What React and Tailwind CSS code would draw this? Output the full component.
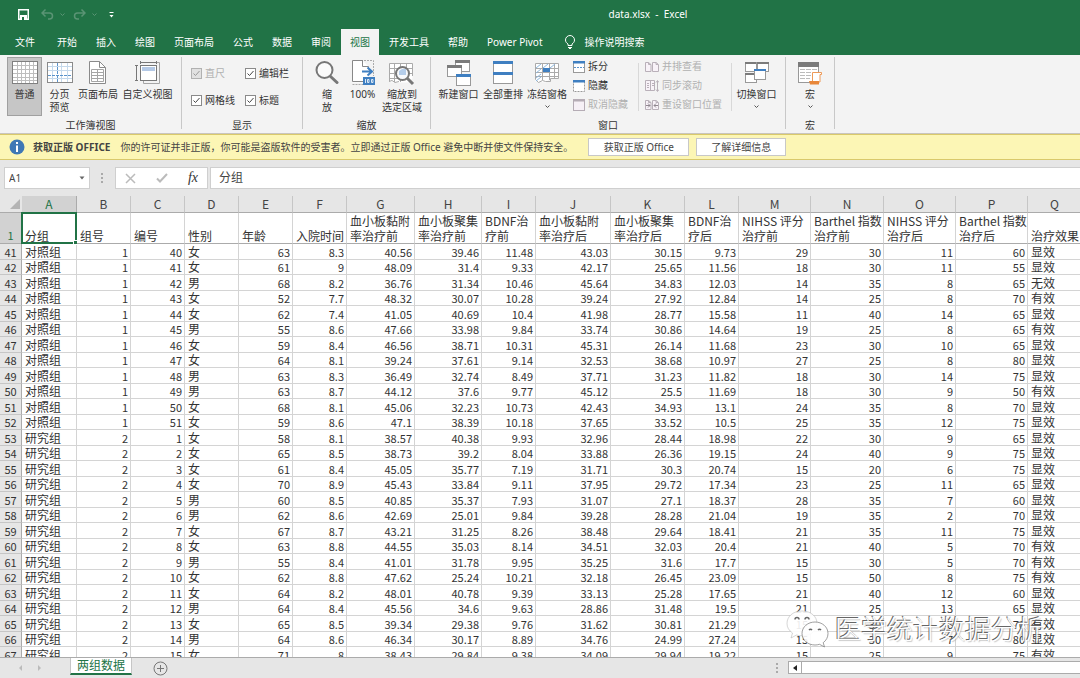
// src/App.jsx
import React, { useState } from "react";

const TABS = ["开始", "插入", "绘图", "页面布局", "公式", "数据", "审阅", "视图", "开发工具", "帮助", "Power Pivot"];

const COLUMNS = [
  { letter: "A", width: 55, title: ["分组"], text: true },
  { letter: "B", width: 54, title: ["组号"] },
  { letter: "C", width: 54, title: ["编号"] },
  { letter: "D", width: 54, title: ["性别"], text: true },
  { letter: "E", width: 54, title: ["年龄"] },
  { letter: "F", width: 54, title: ["入院时间"] },
  { letter: "G", width: 68, title: ["血小板黏附", "率治疗前"] },
  { letter: "H", width: 67, title: ["血小板聚集", "率治疗前"] },
  { letter: "I", width: 54, title: ["BDNF治", "疗前"] },
  { letter: "J", width: 75, title: ["血小板黏附", "率治疗后"] },
  { letter: "K", width: 74, title: ["血小板聚集", "率治疗后"] },
  { letter: "L", width: 54, title: ["BDNF治", "疗后"] },
  { letter: "M", width: 72, title: ["NIHSS 评分", "治疗前"] },
  { letter: "N", width: 73, title: ["Barthel 指数", "治疗前"] },
  { letter: "O", width: 72, title: ["NIHSS 评分", "治疗后"] },
  { letter: "P", width: 72, title: ["Barthel 指数", "治疗后"] },
  { letter: "Q", width: 54, title: ["治疗效果"], text: true },
];

const FIRST_ROW = 41;

const ROWS = `
对照组 1 40 女 63 8.3 40.56 39.46 11.48 43.03 30.15 9.73 29 30 11 60 显效
对照组 1 41 女 61 9 48.09 31.4 9.33 42.17 25.65 11.56 18 30 11 55 显效
对照组 1 42 男 68 8.2 36.76 31.34 10.46 45.64 34.83 12.03 14 35 8 65 无效
对照组 1 43 女 52 7.7 48.32 30.07 10.28 39.24 27.92 12.84 14 25 8 70 有效
对照组 1 44 女 62 7.4 41.05 40.69 10.4 41.98 28.77 15.58 11 40 14 65 显效
对照组 1 45 男 55 8.6 47.66 33.98 9.84 33.74 30.86 14.64 19 25 8 65 有效
对照组 1 46 女 59 8.4 46.56 38.71 10.31 45.31 26.14 11.68 23 30 10 65 显效
对照组 1 47 女 64 8.1 39.24 37.61 9.14 32.53 38.68 10.97 27 25 8 80 显效
对照组 1 48 男 63 8.3 36.49 32.74 8.49 37.71 31.23 11.82 18 30 14 75 显效
对照组 1 49 男 63 8.7 44.12 37.6 9.77 45.12 25.5 11.69 18 30 9 50 有效
对照组 1 50 女 68 8.1 45.06 32.23 10.73 42.43 34.93 13.1 24 35 8 70 显效
对照组 1 51 女 59 8.6 47.1 38.39 10.18 37.65 33.52 10.5 25 35 12 75 显效
研究组 2 1 女 58 8.1 38.57 40.38 9.93 32.96 28.44 18.98 22 30 9 65 显效
研究组 2 2 女 65 8.5 38.73 39.2 8.04 33.88 26.36 19.15 24 40 9 75 显效
研究组 2 3 女 61 8.4 45.05 35.77 7.19 31.71 30.3 20.74 15 20 6 75 显效
研究组 2 4 女 70 8.9 45.43 33.84 9.11 37.95 29.72 17.34 23 25 11 65 显效
研究组 2 5 男 60 8.5 40.85 35.37 7.93 31.07 27.1 18.37 28 35 7 60 显效
研究组 2 6 男 62 8.6 42.69 25.01 9.84 39.28 28.28 21.04 19 35 2 70 显效
研究组 2 7 女 67 8.7 43.21 31.25 8.26 38.48 29.64 18.41 21 35 11 75 显效
研究组 2 8 女 63 8.8 44.55 35.03 8.14 34.51 32.03 20.4 21 40 5 70 有效
研究组 2 9 男 55 8.4 41.01 31.78 9.95 35.25 31.6 17.7 15 30 5 70 有效
研究组 2 10 女 62 8.8 47.62 25.24 10.21 32.18 26.45 23.09 15 50 8 75 有效
研究组 2 11 女 64 8.2 48.01 40.78 9.39 33.13 25.28 17.65 21 40 12 60 显效
研究组 2 12 男 64 8.4 45.56 34.6 9.63 28.86 31.48 19.5 21 25 13 65 显效
研究组 2 13 女 65 8.5 39.34 29.38 9.76 31.62 30.81 21.29 15 30 6 70 有效
研究组 2 14 男 64 8.6 46.34 30.17 8.89 34.76 24.99 27.24 15 30 7 80 显效
研究组 2 15 女 71 8 38.43 29.84 9.38 34.09 29.94 19.22 15 25 9 75 有效
`
  .trim()
  .split("\n")
  .map((line) => line.split(" "));

/* ---------- icons ---------- */

function NormalIcon() {
  return (
    <svg width="26" height="24" viewBox="0 0 26 24" fill="none">
      <rect x="0.5" y="1.5" width="25" height="22" fill="#fff" stroke="#7f7f7f" />
      <path d="M1 5.5h24M1 9.5h24M1 13.5h24M1 17.5h24M1 20.5h24M5.5 2v21M9.5 2v21M13.5 2v21M17.5 2v21M21.5 2v21" stroke="#bdbdbd" />
    </svg>
  );
}

function PageBreakIcon() {
  return (
    <svg width="26" height="24" viewBox="0 0 26 24" fill="none">
      <rect x="0.5" y="2.5" width="25" height="20" fill="#fff" stroke="#8a8a8a" />
      <path d="M1 6.5h24M1 10.5h24M1 18.5h24M5.5 3v19M14.5 3v19M20.5 3v19" stroke="#c5d9ec" />
      <path d="M1 15.5h24M10.5 3v19" stroke="#5b93cb" strokeDasharray="3 1" />
    </svg>
  );
}

function PageLayoutIcon() {
  return (
    <svg width="20" height="24" viewBox="0 0 20 24" fill="none">
      <path d="M1.5 1.5h10l6 6v16h-16z" fill="#fff" stroke="#8a8a8a" />
      <path d="M11.5 1.5v6h6" stroke="#8a8a8a" />
      <path d="M3.5 9.5h12v12h-12zM3.5 12.5h12M3.5 15.5h12M3.5 18.5h12M9.5 9v12" stroke="#a5a5a5" />
    </svg>
  );
}

function CustomViewIcon() {
  return (
    <svg width="26" height="24" viewBox="0 0 26 24" fill="none">
      <path d="M6 2.5h15M5.5 1v3M21.5 1v3M1.5 6v14M0 5.5h3M0 20.5h3" stroke="#777" />
      <path d="M22 2.5h2.5v21H8.5v-3" stroke="#a5a5a5" />
      <rect x="5.5" y="5.500" width="16" height="15" fill="#fff" stroke="#777" />
      <rect x="7" y="7" width="13" height="4" fill="#b4c9e6" />
    </svg>
  );
}

function ZoomIcon() {
  return (
    <svg width="24" height="24" viewBox="0 0 24 24" fill="none">
      <path d="M15 16l7 6.5" stroke="#777" strokeWidth="3" strokeLinecap="round" />
      <circle cx="9.5" cy="10" r="8" fill="#fbfbfb" stroke="#777" strokeWidth="2" />
    </svg>
  );
}

function Zoom100Icon() {
  return (
    <svg width="24" height="26" viewBox="0 0 24 26" fill="none">
      <path d="M1.5 0.5h10l6 6v16h-16z" fill="#fff" />
      <path d="M12 0.5H1.5v21H12M11.5 0.500v6h6v3" stroke="#888" />
      <path d="M13 0.5h9.5V16M1.5 24.5H12" stroke="#aaa" strokeDasharray="2 1" />
      <path d="M11 11.5h9M16.5 7.5l4.500 4-4.500 4" stroke="#3f7fc1" strokeWidth="2" />
      <rect x="12" y="17" width="12" height="8" fill="#3f7fc1" />
      <path d="M14.5 19v4M16.5 19.5h1.500v3h-1.500zM20.5 19.5h1.500v3h-1.500z" stroke="#dbe8f5" />
    </svg>
  );
}

function ZoomSelectionIcon() {
  return (
    <svg width="26" height="26" viewBox="0 0 26 26" fill="none">
      <path d="M0.5 3.5h23v15l-5 4H3l-2.5-1z" fill="#fff" />
      <path d="M0.5 3.5h23V16M0.5 3.5v18M0 8.5h24M0 13.5h24M0 18.5h20M5.5 3v19M11.5 3v19M17.5 3v12M0 21.5l3-1 3 2 4-1" stroke="#aaa" />
      <path d="M18 18l6 6" stroke="#777" strokeWidth="3" />
      <circle cx="13.5" cy="13.5" r="6.5" fill="#f7f9fc" stroke="#777" strokeWidth="2" />
      <path d="M10 15v-4l3-2h4v6z" fill="#b4cdea" />
    </svg>
  );
}

function NewWindowIcon() {
  return (
    <svg width="24" height="26" viewBox="0 0 24 26" fill="none">
      <rect x="8.5" y="0.5" width="14" height="11" fill="#fff" stroke="#999" />
      <path d="M8 0h15v3H8z" fill="#7b7b7b" />
      <rect x="0.5" y="5.5" width="14" height="11" fill="#fff" stroke="#999" />
      <path d="M0 5h15v3H0z" fill="#7b7b7b" />
      <rect x="9.5" y="14.5" width="14" height="11" fill="#fff" stroke="#999" />
      <path d="M9 14h15v3H9z" fill="#3f7fc1" />
    </svg>
  );
}

function ArrangeIcon() {
  return (
    <svg width="22" height="24" viewBox="0 0 22 24" fill="none">
      <rect x="1.5" y="1.5" width="19" height="22" fill="#fff" stroke="#999" />
      <path d="M1 1h20v3H1zM1 12h20v3H1z" fill="#3f7fc1" />
    </svg>
  );
}

function FreezeIcon() {
  return (
    <svg width="26" height="24" viewBox="0 0 26 24" fill="none">
      <path d="M1.5 3.5h23v15h-8l-5 4-10-1z" fill="#fff" />
      <path d="M1.500 3.5h23v15h-8M1.5 3.5v16l3 3 4-2 3 1h5v-3M1 8.5h23M1 12.5h23M1 16.5h23M8.5 3v17M15.5 3v17M20.5 3v15" stroke="#aaa" />
      <path d="M2 8l5-4M9 8l5-4M16 8l5-4M2 13l5-4M2 18l5-4M2 21l5-4" stroke="#8fb8de" />
      <rect x="9" y="8" width="7" height="4" fill="#3f7fc1" />
    </svg>
  );
}

function SwitchWindowIcon() {
  return (
    <svg width="24" height="24" viewBox="0 0 24 24" fill="none">
      <rect x="0.5" y="2.5" width="11" height="9" fill="#fff" stroke="#999" />
      <rect x="12.5" y="2.5" width="11" height="9" fill="#fff" stroke="#999" />
      <rect x="0.5" y="13.5" width="11" height="9" fill="#fff" stroke="#999" />
      <path d="M0 2h11v2H0zM12 2h12v2H12zM0 13h11v2H0z" fill="#7b7b7b" />
      <rect x="9.5" y="9.5" width="11" height="10" fill="#fff" stroke="#999" />
      <path d="M9 9h12v2H9z" fill="#3f7fc1" />
    </svg>
  );
}

function MacroIcon() {
  return (
    <svg width="26" height="26" viewBox="0 0 26 26" fill="none">
      <rect x="1.5" y="2.5" width="20" height="20" fill="#fff" stroke="#999" />
      <path d="M1 2h21v5H1z" fill="#7b7b7b" />
      <path d="M3 9.5h5M9 9.5h5M15 9.5h5M3 12.5h5M9 12.5h5M3 15.5h5M9 15.5h5M3 18.5h5M9 18.500h4" stroke="#bbb" />
      <path d="M15.5 22v-9.500h9v2h-1.500V22z" fill="#fff" stroke="#ee9a58" />
      <path d="M12 21h10v3.500h-9z" fill="#e8873a" />
    </svg>
  );
}

function PaneIcon({ kind }) {
  const off = kind === "unhide";
  return (
    <svg width="12" height="12" viewBox="0 0 12 12" fill="none">
      <rect
        x="0.5"
        y="0.5"
        width="11"
        height="11"
        fill={off ? "#f6f0f6" : "#fff"}
        stroke={off ? "#b5acb5" : "#999"}
        strokeDasharray={kind === "hide" ? "2 1" : undefined}
      />
      <path d="M0 0h12v2.500H0z" fill={off ? "#b5acb5" : "#3f7fc1"} />
      {kind === "split" && <path d="M1 6.5h10" stroke="#5b93cb" strokeDasharray="2 1" />}
    </svg>
  );
}

function CompareIcon({ kind }) {
  return (
    <svg width="14" height="12" viewBox="0 0 14 12" fill="#f8f2f8" stroke="#b9b0b9">
      {kind === "sync" ? (
        <>
          <path d="M0.5 0.5h9v10h-9zM5.5 1v9M2 3.5h2M2 5.5h2M2 7.5h2M7 3.5h2M7 5.5h2" />
          <path d="M12.500 1v10M11 2.5l1.500-2 1.500 2M11 9.5l1.500 2 1.500-2" fill="none" />
        </>
      ) : (
        <>
          <path d="M0.5 1.5h3l2.500 2v7H0.5zM7.5 1.5h3.500l2.500 2v7h-6zM3.5 1.5v2H6M11 1.5v2h2" />
          {kind === "reset" && <path d="M1 6.5h4M3 4.500l2 2-2 2M13 6.5H9M11 4.500l-2 2 2 2" fill="none" stroke="#8f878f" />}
        </>
      )}
    </svg>
  );
}

function Chevron() {
  return (
    <svg className="mt-1" width="5" height="4" viewBox="0 0 5 4" fill="none">
      <path d="M0.5 0.5l2 2 2-2" stroke="#555" />
    </svg>
  );
}

/* ---------- ribbon parts ---------- */

function RibbonButton({ icon, lines, width, active, menu }) {
  return (
    <button
      className={`${width} h-[59px] shrink-0 flex flex-col items-center pt-[3px] whitespace-nowrap leading-[13px] ${
        active ? "bg-[#c6c6c6] outline outline-1 -outline-offset-1 outline-[#a0a0a0]" : "hover:bg-[#dadada]"
      }`}
    >
      <span className="h-6 mb-1 flex items-start justify-center">{icon}</span>
      {lines.map((l) => (
        <span key={l}>{l}</span>
      ))}
      {menu && <Chevron />}
    </button>
  );
}

function RibbonGroup({ label, className, children }) {
  return (
    <section className="flex shrink-0">
      <div className="flex flex-col">
        <div className={`flex h-[60px] ${className}`}>{children}</div>
        <div className="text-center leading-4">{label}</div>
      </div>
      <div className="w-px h-[72px] bg-[#c8c8c8]" />
    </section>
  );
}

function Check({ label, checked, disabled }) {
  const [on, setOn] = useState(checked);
  return (
    <label className={`flex items-center gap-[3px] ${disabled ? "text-[#b1b1b1]" : ""}`}>
      <span className="grid">
        <input
          type="checkbox"
          checked={on}
          disabled={disabled}
          onChange={() => setOn(!on)}
          className="[grid-area:1/1] appearance-none size-[11px] border border-[#8a8a8a] bg-white disabled:bg-[#e1e1e1] disabled:border-[#b1b1b1]"
        />
        {on && (
          <svg className="[grid-area:1/1] pointer-events-none" width="11" height="11" viewBox="0 0 11 11" fill="none">
            <path d="M2.5 5.5l2 2 4-4.500" stroke={disabled ? "#999" : "#444"} />
          </svg>
        )}
      </span>
      {label}
    </label>
  );
}

function SmallButton({ icon, label, disabled }) {
  return (
    <button disabled={disabled} className="h-[19px] flex items-center gap-[3px] whitespace-nowrap disabled:text-[#b1b1b1]">
      {icon}
      {label}
    </button>
  );
}

function TitleBar() {
  return (
    <header className="grid items-center h-[29px] shrink-0">
      <div className="[grid-area:1/1] flex items-center pl-[18px]">
        <button aria-label="保存">
          <svg width="11" height="11" viewBox="0 0 11 11" fill="none">
            <path d="M0.75 0.75h9.500v9.500H0.75z" stroke="#fff" strokeWidth="1.5" />
            <path d="M2 6h7v5H2z" fill="#fff" />
            <path d="M4 8h2v3H4z" fill="#217346" />
          </svg>
        </button>
        <button aria-label="撤消" className="ml-3 flex items-center gap-1.5">
          <svg width="13" height="11" viewBox="0 0 13 11" fill="none" stroke="#5a9474" strokeWidth="1.5">
            <path d="M4.5 0.5L1 4l3.5 3.5M1 4h7.5a3 3 0 0 1 0 6H7" />
          </svg>
          <svg width="5" height="4" viewBox="0 0 5 4" fill="none" stroke="#5a9474">
            <path d="M0.5 0.5l2 2 2-2" />
          </svg>
        </button>
        <button aria-label="恢复" className="ml-2 flex items-center gap-1.5">
          <svg width="13" height="11" viewBox="0 0 13 11" fill="none" stroke="#5a9474" strokeWidth="1.5">
            <path d="M8.5 0.5L12 4 8.5 7.5M12 4H4.5a3 3 0 0 0 0 6H6" />
          </svg>
          <svg width="5" height="4" viewBox="0 0 5 4" fill="none" stroke="#5a9474">
            <path d="M0.5 0.5l2 2 2-2" />
          </svg>
        </button>
        <button aria-label="自定义快速访问工具栏" className="ml-3">
          <svg width="5" height="6" viewBox="0 0 5 6" fill="#fff">
            <path d="M0.5 0h4v1h-4zM0.5 3h4l-2 2.5z" />
          </svg>
        </button>
      </div>
      <h1 className="[grid-area:1/1] pl-[20%] text-center text-white whitespace-pre pointer-events-none">{"data.xlsx  -  Excel"}</h1>
    </header>
  );
}

function RibbonTabs() {
  const [active, setActive] = useState("视图");
  return (
    <nav className="flex h-[26px] shrink-0 text-white">
      <button className="pl-[15px] pr-[13px]">文件</button>
      <div className="flex gap-px">
        {TABS.map((t) => (
          <button
            key={t}
            onClick={() => setActive(t)}
            className={`px-[9px] whitespace-nowrap ${t === active ? "bg-[#f3f3f3] text-[#217346]" : "hover:bg-[#185c37]"}`}
          >
            {t}
          </button>
        ))}
      </div>
      <button className="ml-3 flex items-center gap-[9px]">
        <svg width="12" height="14" viewBox="0 0 12 14" fill="none" stroke="#fff">
          <path d="M4 10.5V9C2.5 8 1.5 6.8 1.5 5a4.5 4.5 0 0 1 9 0c0 1.8-1 3-2.5 4v1.5zM4 12.5h4M5 13.5h2" />
        </svg>
        操作说明搜索
      </button>
    </nav>
  );
}

function Ribbon() {
  return (
    <div className="flex pt-[2px] h-[79px] shrink-0 overflow-hidden bg-[#f3f3f3] border-b border-[#c9c5bd] text-[#333]">
      <RibbonGroup label="工作簿视图" className="pl-[7px] pr-[5px]">
        <RibbonButton icon={<NormalIcon />} lines={["普通"]} width="w-[35px]" active />
        <RibbonButton icon={<PageBreakIcon />} lines={["分页", "预览"]} width="w-[35px]" />
        <RibbonButton icon={<PageLayoutIcon />} lines={["页面布局"]} width="w-[42px]" />
        <RibbonButton icon={<CustomViewIcon />} lines={["自定义视图"]} width="w-[57px]" />
      </RibbonGroup>
      <RibbonGroup label="显示" className="pl-[9px] pr-[3px]">
        <div className="grid grid-cols-[54px_54px] grid-rows-[27px_27px] pt-[3px]">
          <Check label="直尺" checked disabled />
          <Check label="编辑栏" checked />
          <Check label="网格线" checked />
          <Check label="标题" checked />
        </div>
      </RibbonGroup>
      <RibbonGroup label="缩放" className="px-[5px]">
        <RibbonButton icon={<ZoomIcon />} lines={["缩", "放"]} width="w-[38px]" />
        <RibbonButton icon={<Zoom100Icon />} lines={["100%"]} width="w-[33px]" />
        <RibbonButton icon={<ZoomSelectionIcon />} lines={["缩放到", "选定区域"]} width="w-[46px]" />
      </RibbonGroup>
      <RibbonGroup label="窗口" className="pl-[5px] pr-1">
        <RibbonButton icon={<NewWindowIcon />} lines={["新建窗口"]} width="w-[45px]" />
        <RibbonButton icon={<ArrangeIcon />} lines={["全部重排"]} width="w-[44px]" />
        <RibbonButton icon={<FreezeIcon />} lines={["冻结窗格"]} width="w-[44px]" menu />
        <div className="w-[69px] pl-1">
          <SmallButton icon={<PaneIcon kind="split" />} label="拆分" />
          <SmallButton icon={<PaneIcon kind="hide" />} label="隐藏" />
          <SmallButton icon={<PaneIcon kind="unhide" />} label="取消隐藏" disabled />
        </div>
        <div className="w-px h-12 mt-1.5 bg-[#d8d8d8]" />
        <div className="w-[92px] pl-1.5">
          <SmallButton icon={<CompareIcon kind="side" />} label="并排查看" disabled />
          <SmallButton icon={<CompareIcon kind="sync" />} label="同步滚动" disabled />
          <SmallButton icon={<CompareIcon kind="reset" />} label="重设窗口位置" disabled />
        </div>
        <div className="w-px h-12 mt-1.5 bg-[#d8d8d8]" />
        <RibbonButton icon={<SwitchWindowIcon />} lines={["切换窗口"]} width="w-[49px]" menu />
      </RibbonGroup>
      <RibbonGroup label="宏" className="px-1">
        <RibbonButton icon={<MacroIcon />} lines={["宏"]} width="w-10" menu />
      </RibbonGroup>
    </div>
  );
}

function LicenseBar() {
  return (
    <div className="flex items-center h-[26px] shrink-0 pl-[9px] bg-[#fcf6b5] border-y border-[#d9c96b] text-[#444] whitespace-nowrap">
      <svg width="16" height="16" viewBox="0 0 16 16">
        <circle cx="8" cy="8" r="7.5" fill="#3f78b5" />
        <path d="M7 3h2v2H7zM7 6.5h2V13H7z" fill="#fff" />
      </svg>
      <strong className="ml-2">获取正版 OFFICE</strong>
      <span className="ml-[10px]">你的许可证并非正版，你可能是盗版软件的受害者。立即通过正版 Office 避免中断并使文件保持安全。</span>
      <button className="ml-[15px] w-[101px] h-[18px] bg-white border border-[#c8c8c8]">获取正版 Office</button>
      <button className="ml-[7px] w-[90px] h-[18px] bg-white border border-[#c8c8c8]">了解详细信息</button>
    </div>
  );
}

function FormulaBar() {
  return (
    <div className="flex h-9 shrink-0 pl-1 py-[7px] text-[#444]">
      <div className="flex items-center w-[86px] bg-white border border-[#cfcfcf]">
        <input aria-label="名称框" defaultValue="A1" className="w-full min-w-0 pl-1 outline-none" />
        <svg className="mr-1 shrink-0" width="6" height="4" viewBox="0 0 6 4" fill="#666">
          <path d="M0.5 0.5h5l-2.5 3z" />
        </svg>
      </div>
      <svg className="mx-[11px] self-center" width="3" height="10" viewBox="0 0 3 10" fill="#aaa">
        <path d="M0 0h2v2H0zM0 4h2v2H0zM0 8h2v2H0z" />
      </svg>
      <div className="flex items-center justify-between w-[93px] px-[9px] bg-white border border-[#cfcfcf]">
        <button aria-label="取消">
          <svg width="11" height="11" viewBox="0 0 11 11" stroke="#bbb" strokeWidth="1.5">
            <path d="M1 1l9 9M10 1l-9 9" />
          </svg>
        </button>
        <button aria-label="输入">
          <svg width="12" height="10" viewBox="0 0 12 10" fill="none" stroke="#bbb" strokeWidth="2">
            <path d="M1 5.5L4 8.5 11 1" />
          </svg>
        </button>
        <button aria-label="插入函数" className="font-['Liberation_Serif',serif] italic text-sm leading-none text-[#333]">
          fx
        </button>
      </div>
      <input
        aria-label="编辑栏"
        defaultValue="分组"
        className="ml-[2px] flex-1 min-w-0 pl-2 text-xs bg-white border border-r-0 border-[#cfcfcf] outline-none"
      />
    </div>
  );
}

function Sheet() {
  return (
    <main className="flex-1 min-h-0 overflow-hidden">
      <table className="w-[1082px] table-fixed border-separate border-spacing-0 bg-white text-[11px] text-[#333] whitespace-nowrap font-['Noto_Sans_CJK_SC',sans-serif]">
        <colgroup>
          <col className="w-[22px]" />
          {COLUMNS.map((c) => (
            <col key={c.letter} style={{ width: c.width }} />
          ))}
        </colgroup>
        <thead className="bg-[#e6e6e6] text-xs leading-4 text-[#444]">
          <tr className="h-[17px]">
            <th className="p-0 border-b border-[#ababab]">
              <svg className="ml-auto mr-[2px]" width="10" height="10" viewBox="0 0 10 10" fill="#b4b4b4">
                <path d="M10 0v10H0z" />
              </svg>
            </th>
            {COLUMNS.map((c, i) => (
              <th
                key={c.letter}
                className={`p-0 font-normal border-r border-b ${
                  i === 0 ? "bg-[#d2d2d2] text-[#217346] border-r-[#ababab] border-b-[#217346]" : "border-r-[#c6c6c6] border-b-[#ababab]"
                }`}
              >
                {c.letter}
              </th>
            ))}
          </tr>
        </thead>
        <tbody>
          <tr className="h-[31px] text-xs leading-[15px]">
            <th className="p-0 align-bottom font-normal text-[11px] bg-[#d2d2d2] text-[#217346] border-r border-b border-[#ababab]">1</th>
            {COLUMNS.map((c, i) => (
              <td key={c.letter} className="relative p-0 pl-[3px] align-bottom border-r border-b border-r-[#d4d4d4] border-b-[#ababab]">
                {c.title.map((t) => (
                  <div key={t}>{t}</div>
                ))}
                {i === 0 && (
                  <span className="absolute -inset-px border-2 border-[#217346] pointer-events-none">
                    <span className="absolute -right-[3px] -bottom-[3px] size-[5px] bg-[#217346] border border-white" />
                  </span>
                )}
              </td>
            ))}
          </tr>
          {ROWS.map((row, r) => (
            <tr key={r} className={r % 2 ? "h-[15px]" : "h-4"}>
              <th className="p-0 font-normal leading-[14px] bg-[#e6e6e6] border-r border-b border-r-[#ababab] border-b-[#c6c6c6]">
                {FIRST_ROW + r}
              </th>
              {row.map((v, i) => (
                <td
                  key={i}
                  className={`p-0 leading-[14px] border-r border-b border-[#d4d4d4] ${
                    COLUMNS[i].text ? "pl-[3px] text-xs leading-[14px]" : "pr-[2px] text-right"
                  }`}
                >
                  {v}
                </td>
              ))}
            </tr>
          ))}
        </tbody>
      </table>
    </main>
  );
}

function Watermark() {
  return (
    <div className="absolute right-[37px] bottom-[30px] flex items-center gap-1.5 pointer-events-none">
      <svg width="43" height="38" viewBox="0 0 43 38" fill="#fff" stroke="#999">
        <path
          d="M16 1C7 1 1 6.500 1 13.500c0 4 2 7 5.500 9.500L5 28l5.500-3c2 .6 3.500.8 5.500.8C25 25.800 31 20.500 31 13.500S25 1 16 1z"
          fillOpacity="0.9"
          strokeOpacity="0.4"
        />
        <path
          d="M29 12c-7 0-13 4.800-13 11.500S22 35 29 35c1.600 0 3-.2 4.500-.7l5 2.700-1.300-4.300c3-2.200 4.800-5.400 4.800-9.200C42 16.800 36 12 29 12z"
          fillOpacity="0.9"
          stroke="#777"
          strokeOpacity="0.7"
        />
        <path d="M9 9.500a2 2 0 0 1 4 0M19 9.500a2 2 0 0 1 4 0M23 20a2 2 0 0 1 3 0M32 20a2 2 0 0 1 3 0" fill="none" stroke="#666" strokeWidth="1.5" />
      </svg>
      <span className="text-[26px] leading-8 font-light text-white [text-shadow:-1px_-1px_0_#666,1px_1px_1px_#9998]">医学统计数据分析</span>
    </div>
  );
}

function SheetTabs() {
  return (
    <footer className="flex h-[21px] shrink-0 border-t border-[#ababab]">
      <button aria-label="上一张" className="ml-[18px]">
        <svg width="5" height="8" viewBox="0 0 5 8" fill="#bbb">
          <path d="M4 1v6L1 4z" />
        </svg>
      </button>
      <button aria-label="下一张" className="ml-[14px]">
        <svg width="5" height="8" viewBox="0 0 5 8" fill="#bbb">
          <path d="M1 1v6l3-3z" />
        </svg>
      </button>
      <button className="ml-7 w-[62px] h-[17px] text-xs leading-[15px] whitespace-nowrap bg-white text-[#217346] border-x border-x-[#c6c6c6] border-b-2 border-b-[#217346]">
        两组数据
      </button>
      <button aria-label="新工作表" className="ml-[21px]">
        <svg width="15" height="15" viewBox="0 0 15 15" fill="none" stroke="#777">
          <circle cx="7.5" cy="7.5" r="6.5" />
          <path d="M7.5 4v7M4 7.5h7" />
        </svg>
      </button>
      <svg className="ml-auto mr-[10px] mt-[5px]" width="2" height="10" viewBox="0 0 2 10" fill="#aaa">
        <path d="M0 0h2v2H0zM0 4h2v2H0zM0 8h2v2H0z" />
      </svg>
      <div className="flex w-[27%] h-[13px] mt-[3px] bg-white border border-r-0 border-[#ababab]">
        <button aria-label="向左滚动" className="px-1 border-r border-[#ababab]">
          <svg width="4" height="6" viewBox="0 0 4 6" fill="#222">
            <path d="M4 0v6L0 3z" />
          </svg>
        </button>
      </div>
    </footer>
  );
}

export default function App() {
  return (
    <div className="relative flex flex-col h-screen overflow-hidden bg-[#e6e6e6] text-[10px] font-['Noto_Sans','Noto_Sans_CJK_SC',sans-serif]">
      <div className="bg-[#217346]">
        <TitleBar />
        <RibbonTabs />
      </div>
      <Ribbon />
      <LicenseBar />
      <FormulaBar />
      <Sheet />
      <SheetTabs />
      <Watermark />
    </div>
  );
}
